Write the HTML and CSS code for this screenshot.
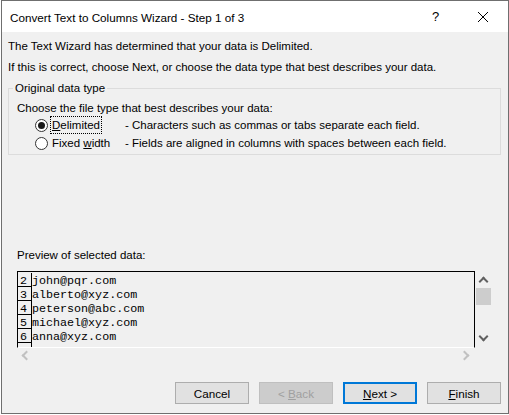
FILE: index.html
```html
<!DOCTYPE html>
<html lang="en">
<head>
    <meta charset="UTF-8">
    <meta name="viewport" content="width=device-width, initial-scale=1.0">
    <title>Convert Text to Columns Wizard</title>
    <link rel="stylesheet" href="styles.css">
</head>
<body>

    <div class="window">
        <div class="titlebar">
            <span class="title">Convert Text to Columns Wizard - Step 1 of 3</span>
            <span class="help">?</span>
            <span class="close">
                <svg width="12" height="12" viewBox="0 0 12 12">
                    <path d="M1 1 L11 11 M11 1 L1 11" stroke="#000" stroke-width="1" fill="none"/>
                </svg>
            </span>
        </div>

        <div class="content">
            <p class="intro">The Text Wizard has determined that your data is Delimited.</p>
            <p class="intro">If this is correct, choose Next, or choose the data type that best describes your data.</p>

            <fieldset class="group">
                <legend>Original data type</legend>
                <p class="hint">Choose the file type that best describes your data:</p>
                <div class="option">
                    <span class="radio checked"></span>
                    <span class="label"><span class="focus"><u>D</u>elimited</span></span>
                    <span class="desc">- Characters such as commas or tabs separate each field.</span>
                </div>
                <div class="option">
                    <span class="radio"></span>
                    <span class="label"><span class="nofocus">Fixed <u>w</u>idth</span></span>
                    <span class="desc">- Fields are aligned in columns with spaces between each field.</span>
                </div>
            </fieldset>

            <p class="preview-label">Preview of selected data:</p>

            <div class="preview">
                <div class="preview-main">
                    <div class="rows" id="rows"></div>
                    <div class="vscroll">
                        <span class="chev up"></span>
                        <span class="thumb"></span>
                        <span class="chev down"></span>
                    </div>
                </div>
                <div class="hscroll">
                    <span class="hchev left"></span>
                    <span class="hchev right"></span>
                </div>
            </div>

            <div class="buttons">
                <button class="btn">Cancel</button>
                <button class="btn" disabled>&lt; <u>B</u>ack</button>
                <button class="btn default"><u>N</u>ext &gt;</button>
                <button class="btn"><u>F</u>inish</button>
            </div>
        </div>
    </div>

    <script>
        const emails = [
            'john@pqr.com',
            'alberto@xyz.com',
            'peterson@abc.com',
            'michael@xyz.com',
            'anna@xyz.com'
        ];

        const rows = document.getElementById('rows');
        emails.forEach((email, index) => {
            const row = document.createElement('div');
            row.className = 'row';
            row.innerHTML = `
                <span class="num">${index + 2}</span>
                <span class="cell">${email}</span>
            `;
            rows.appendChild(row);
        });

        // partly hidden row below the last one
        const more = document.createElement('div');
        more.className = 'row';
        more.innerHTML = '<span class="num"></span><span class="cell"></span>';
        rows.appendChild(more);
    </script>

</body>
</html>
```

FILE: styles.css
```css
body {
    margin: 0;
    background-color: #fff;
    font-family: "Segoe UI", "Liberation Sans", Arial, sans-serif;
    font-size: 11.5px;
    color: #000;
}

.window {
    box-sizing: border-box;
    width: 508px;
    height: 414px;
    margin-left: 1px;
    border: 1px solid #6f6f6f;
    background-color: #f0f0f0;
}

.titlebar {
    display: flex;
    align-items: center;
    height: 31px;
    padding-left: 8px;
    background-color: #fff;
}

.title {
    flex: 1;
    font-size: 11.7px;
    padding-top: 1px;
}

.help {
    width: 12px;
    font-size: 13px;
    margin-right: 33px;
}

.close {
    display: flex;
    margin-right: 19px;
}

.content {
    padding: 4px 7px 0 6px;
}

.intro {
    margin: 0;
    line-height: 21px;
    white-space: nowrap;
}

.group {
    margin: 2px 0 0 0;
    padding: 0 4px 2px 4px;
    border: 1px solid #dcdcdc;
}

.group legend {
    padding: 0 2px;
    line-height: 16px;
}

.hint {
    margin: 4px 0 0 4px;
    line-height: 16px;
}

.option {
    display: flex;
    align-items: center;
    height: 18px;
    margin-left: 22px;
}

.radio {
    box-sizing: border-box;
    display: flex;
    align-items: center;
    justify-content: center;
    width: 13px;
    height: 13px;
    margin-right: 2px;
    border: 1px solid #333;
    border-radius: 50%;
    background-color: #fff;
}

.radio.checked::after {
    content: "";
    width: 7px;
    height: 7px;
    border-radius: 50%;
    background-color: #1a1a1a;
}

.label {
    width: 75px;
}

.focus,
.nofocus {
    display: inline-block;
    padding: 0 1px;
    line-height: 16px;
    border: 1px dotted transparent;
}

.focus {
    border-color: #000;
}

.preview-label {
    margin: 92px 0 0 9px;
    line-height: 16px;
}

.preview {
    width: 475px;
    margin: 8px 0 0 9px;
}

.preview-main {
    display: flex;
    height: 77px;
}

.rows {
    flex: 1;
    overflow: hidden;
    padding-top: 1px;
    border: 1px solid #000;
    border-bottom: 1px solid #fff;
    font-family: "Liberation Mono", "Courier New", monospace;
    font-size: 11.7px;
}

.row {
    box-sizing: border-box;
    display: flex;
    height: 14px;
    line-height: 12px;
}

.num {
    box-sizing: border-box;
    width: 14px;
    padding: 2px 0 0 2px;
    border-right: 1px solid #000;
    border-bottom: 1px solid #000;
}

.cell {
    padding-top: 2px;
}

.vscroll {
    position: relative;
    width: 17px;
}

.thumb {
    position: absolute;
    left: 1px;
    top: 17px;
    width: 15px;
    height: 17px;
    background-color: #cdcdcd;
}

.chev {
    position: absolute;
    left: 5px;
    width: 5px;
    height: 5px;
    border-left: 2px solid #606060;
    border-top: 2px solid #606060;
}

.chev.up {
    top: 7px;
    transform: rotate(45deg);
}

.chev.down {
    top: 62px;
    transform: rotate(225deg);
}

.hscroll {
    position: relative;
    height: 14px;
}

.hchev {
    position: absolute;
    top: 4px;
    width: 5px;
    height: 5px;
    border-left: 2px solid #c1c1c1;
    border-top: 2px solid #c1c1c1;
}

.hchev.left {
    left: 6px;
    transform: rotate(-45deg);
}

.hchev.right {
    left: 444px;
    transform: rotate(135deg);
}

.buttons {
    display: flex;
    justify-content: flex-end;
    gap: 10px;
    margin-top: 20px;
}

.btn {
    box-sizing: border-box;
    width: 74px;
    height: 22px;
    padding: 0;
    border: 1px solid #adadad;
    background-color: #e1e1e1;
    font-family: "Segoe UI", "Liberation Sans", Arial, sans-serif;
    font-size: 11.7px;
    color: #000;
}

.btn:disabled {
    border-color: #bfbfbf;
    background-color: #cccccc;
    color: #a0a0a0;
}

.btn.default {
    border: 2px solid #0078d7;
}
```
